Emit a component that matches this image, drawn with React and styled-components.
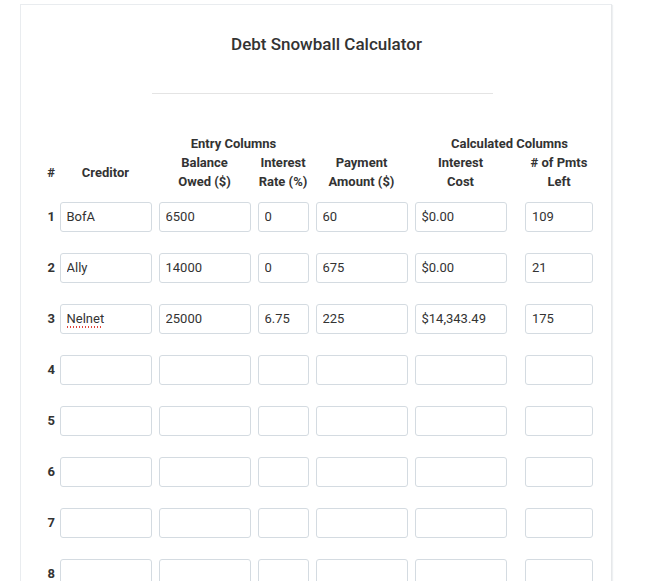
import React from "react";
import styled, { createGlobalStyle } from "styled-components";

const Global = createGlobalStyle`
  html, body { margin: 0; padding: 0; background: #fff; }
  body { font-family: Roboto, "Liberation Sans", Arial, sans-serif; color: #333; }
`;

const Card = styled.div`
  margin: 4px 0 0 20px;
  width: 566px;
  border: 1px solid #e9ecef;
  border-right-color: #e6e8ea;
  box-shadow: 2px 0 1px -1px #eef0f2;
  background: #fff;
  padding: 27px 0 40px 24px;
  box-sizing: content-box;
`;

const Inner = styled.div`
  width: 563px;
`;

const Title = styled.h2`
  margin: 0;
  text-align: center;
  font-size: 17px;
  line-height: 24px;
  font-weight: 500;
  color: #333;
`;

const Divider = styled.hr`
  width: 341px;
  margin: 37px 0 0 107px;
  border: 0;
  border-top: 1px solid #e4e4e4;
  height: 0;
`;

const columns = "11px 99px 99px 58px 99px 99px 98px";

const HeaderGrid = styled.div`
  display: grid;
  grid-template-columns: ${columns};
  margin-top: 40px;
`;

const Row = styled.div`
  display: grid;
  grid-template-columns: ${columns};
  height: 51px;
  align-items: center;
`;

const Head = styled.div`
  grid-column: ${(p) => p.$col};
  grid-row: ${(p) => p.$row};
  font-size: 13px;
  line-height: 19px;
  font-weight: 700;
  color: #333;
  text-align: ${(p) => p.$align || "center"};
  align-self: center;
  white-space: nowrap;
  padding-right: ${(p) => (p.$align === "right" ? "1px" : "0")};
`;

const Num = styled.div`
  font-size: 13px;
  font-weight: 700;
  text-align: right;
  padding-right: 1px;
  color: #333;
`;

const Cell = styled.div`
  position: relative;
  display: flex;
  justify-content: center;
  padding: 0 3.5px;
`;

const Field = styled.input`
  box-sizing: border-box;
  width: ${(p) => (p.$narrow ? "68px" : "100%")};
  height: 30px;
  border: 1px solid #d4dbe1;
  border-radius: 3px;
  padding: 0 6px;
  font-family: Roboto, "Liberation Sans", Arial, sans-serif;
  font-size: 13px;
  color: #333;
  background: #fff;
  outline: none;
`;

const Squiggle = styled.span`
  position: absolute;
  left: 10px;
  top: 22px;
  width: 37px;
  height: 2px;
  background-image: radial-gradient(circle, #e0443a 0.9px, transparent 1px);
  background-size: 3px 2px;
  pointer-events: none;
`;

const rows = [
  ["BofA", "6500", "0", "60", "$0.00", "109"],
  ["Ally", "14000", "0", "675", "$0.00", "21"],
  ["Nelnet", "25000", "6.75", "225", "$14,343.49", "175"],
  ...Array.from({ length: 7 }, () => ["", "", "", "", "", ""]),
];

export default function App() {
  return (
    <>
      <Global />
      <Card>
        <Inner>
          <Title>Debt Snowball Calculator</Title>
          <Divider />
          <HeaderGrid>
            <Head $col="3 / 5" $row="1">Entry Columns</Head>
            <Head $col="6 / 8" $row="1">Calculated Columns</Head>
            <Head $col="1" $row="2" $align="right">#</Head>
            <Head $col="2" $row="2">Creditor</Head>
            <Head $col="3" $row="2">Balance<br />Owed ($)</Head>
            <Head $col="4" $row="2">Interest<br />Rate (%)</Head>
            <Head $col="5" $row="2">Payment<br />Amount ($)</Head>
            <Head $col="6" $row="2">Interest<br />Cost</Head>
            <Head $col="7" $row="2"># of Pmts<br />Left</Head>
          </HeaderGrid>
          {rows.map((r, i) => (
            <Row key={i}>
              <Num>{i + 1}</Num>
              {r.map((v, j) => (
                <Cell key={j}>
                  <Field readOnly spellCheck={false} value={v} $narrow={j === 5} />
                  {v === "Nelnet" && <Squiggle />}
                </Cell>
              ))}
            </Row>
          ))}
        </Inner>
      </Card>
    </>
  );
}
